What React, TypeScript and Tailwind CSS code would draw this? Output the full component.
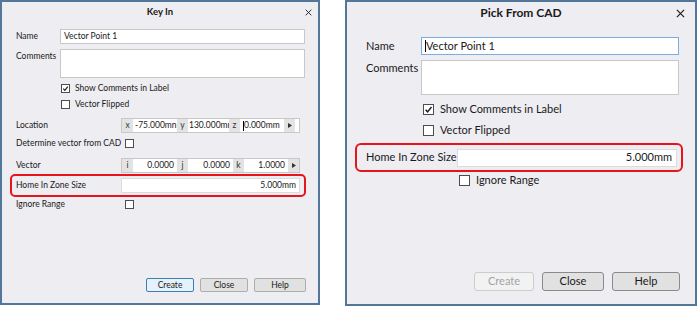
const font = { fontFamily: 'Lato, "Open Sans", Arial, sans-serif' };

const CheckBox = ({ checked, size }: { checked?: boolean; size: number }) => (
  <span
    className={`shrink-0 flex items-center justify-center bg-white border border-[#4d4d4d] ${size === 9 ? "w-[9px] h-[9px]" : "w-[11px] h-[11px]"}`}
  >
    {checked && (
      <svg viewBox="0 0 10 10" className="w-full h-full">
        <path d="M1.8 5.2 L4 7.6 L8.3 2.2" fill="none" stroke="#1a1a1a" strokeWidth="1.6" />
      </svg>
    )}
  </span>
);

const CloseX = ({ s }: { s: number }) => (
  <svg width={s} height={s} viewBox="0 0 10 10">
    <path d="M1 1 L9 9 M9 1 L1 9" stroke="#1a1a1a" strokeWidth="1.3" />
  </svg>
);

const Seg = ({ label }: { label: string }) => (
  <span className="w-[11px] h-full shrink-0 flex items-center justify-center bg-[#e3e3e3] text-[#333]">{label}</span>
);

const Arrow = () => (
  <span className="w-[11px] h-full shrink-0 flex items-center justify-center bg-[#e3e3e3]">
    <svg width="4" height="5" viewBox="0 0 4 5">
      <path d="M0 0 L4 2.5 L0 5 Z" fill="#333" />
    </svg>
  </span>
);

function KeyIn() {
  return (
    <div className="w-[320px] h-[305px] border-2 border-[#52779b] bg-[#eeedf2] flex flex-col text-[8.5px] text-[#1a1a1a] whitespace-nowrap" style={font}>
      <div className="h-[20px] grid grid-cols-[1fr_auto_1fr] items-center">
        <span />
        <span className="font-bold text-[9.5px]">Key In</span>
        <span className="flex justify-end pr-[6px]">
          <CloseX s={7} />
        </span>
      </div>
      <div className="flex flex-col pl-[14px] pr-[13px] mt-[7px]">
        <div className="h-[15px] flex items-center">
          <span className="w-[44px]">Name</span>
          <div className="flex-1 h-full bg-white border border-[#c8c8c8] flex items-center px-[3px]">Vector Point 1</div>
        </div>
        <div className="h-[29px] flex items-start mt-[5px]">
          <span className="w-[44px] pt-[1px]">Comments</span>
          <div className="flex-1 h-full bg-white border border-[#c8c8c8]" />
        </div>
        <div className="h-[14px] flex items-center gap-[5px] mt-[3px] pl-[45px]">
          <CheckBox checked size={9} />
          <span>Show Comments in Label</span>
        </div>
        <div className="h-[14px] flex items-center gap-[5px] mt-[2px] pl-[45px]">
          <CheckBox size={9} />
          <span>Vector Flipped</span>
        </div>
        <div className="h-[15px] flex items-center mt-[7px]">
          <span className="w-[105px]">Location</span>
          <div className="w-[179px] h-full flex border border-[#c8c8c8] bg-white">
            <Seg label="x" />
            <span className="w-[44px] flex items-center pl-[2px]">-75.000mn</span>
            <Seg label="y" />
            <span className="w-[41px] flex items-center pl-[1px]">130.000mn</span>
            <Seg label="z" />
            <span className="w-[44px] flex items-center pl-[3px]">
              <span className="w-px h-[10px] bg-black" />
              0.000mm
            </span>
            <Arrow />
          </div>
        </div>
        <div className="h-[14px] flex items-center mt-[3px]">
          <span className="w-[109px]">Determine vector from CAD</span>
          <CheckBox size={9} />
        </div>
        <div className="h-[15px] flex items-center mt-[8px]">
          <span className="w-[105px]">Vector</span>
          <div className="w-[179px] h-full flex border border-[#c8c8c8] bg-white">
            <Seg label="i" />
            <span className="w-[44px] flex items-center justify-end pr-[3px]">0.0000</span>
            <Seg label="j" />
            <span className="w-[45px] flex items-center justify-end pr-[3px]">0.0000</span>
            <Seg label="k" />
            <span className="w-[44px] flex items-center justify-end pr-[3px]">1.0000</span>
            <Arrow />
          </div>
        </div>
        <div className="h-[23px] -ml-[6px] w-[296px] mt-[1px] border-2 border-[#e8141b] rounded-[5px] flex items-center pl-[4px]">
          <span className="w-[105px]">Home In Zone Size</span>
          <div className="w-[179px] h-[15px] bg-white border border-[#dcdcdc] flex items-center justify-end pr-[3px]">5.000mm</div>
        </div>
        <div className="h-[14px] flex items-center">
          <span className="w-[109px]">Ignore Range</span>
          <CheckBox size={9} />
        </div>
      </div>
      <div className="mt-auto pb-[11px] pr-[12px] flex justify-end gap-[6px]">
        <button className="w-[48px] h-[14px] flex items-center justify-center bg-[#e5f1fb] border border-[#3c7fb1] rounded-[2px]">Create</button>
        <button className="w-[48px] h-[14px] flex items-center justify-center bg-[#e1e1e1] border border-[#adadad] rounded-[2px]">Close</button>
        <button className="w-[52px] h-[14px] flex items-center justify-center bg-[#e1e1e1] border border-[#adadad] rounded-[2px]">Help</button>
      </div>
    </div>
  );
}

function PickFromCad() {
  return (
    <div className="w-[352px] h-[306px] border-2 border-[#52779b] bg-[#eeedf2] flex flex-col text-[11px] text-[#1a1a1a] whitespace-nowrap" style={font}>
      <div className="h-[22px] grid grid-cols-[1fr_auto_1fr] items-center">
        <span />
        <span className="font-bold text-[12px]">Pick From CAD</span>
        <span className="flex justify-end pr-[10px]">
          <CloseX s={9} />
        </span>
      </div>
      <div className="flex flex-col pl-[19px] pr-[16px] mt-[13px]">
        <div className="h-[18px] flex items-center">
          <span className="w-[55px]">Name</span>
          <div className="flex-1 h-full bg-white border border-[#7aaee0] flex items-center pl-[3px]">
            <span className="w-px h-[12px] bg-black" />
            Vector Point 1
          </div>
        </div>
        <div className="h-[35px] flex items-start mt-[5px]">
          <span className="w-[55px]">Comments</span>
          <div className="flex-1 h-full bg-white border border-[#c8c8c8]" />
        </div>
        <div className="h-[14px] flex items-center gap-[6px] mt-[7px] pl-[57px]">
          <CheckBox checked size={11} />
          <span>Show Comments in Label</span>
        </div>
        <div className="h-[14px] flex items-center gap-[6px] mt-[7px] pl-[57px]">
          <CheckBox size={11} />
          <span>Vector Flipped</span>
        </div>
        <div className="h-[29px] -ml-[11px] w-[328px] mt-[6px] border-2 border-[#e8141b] rounded-[6px] flex items-center pl-[9px]">
          <span className="w-[91px]">Home In Zone Size</span>
          <div className="w-[220px] h-[18px] bg-white border border-[#dcdcdc] flex items-center justify-end pr-[4px]">5.000mm</div>
        </div>
        <div className="h-[14px] flex items-center gap-[6px] mt-[1px] pl-[93px]">
          <CheckBox size={11} />
          <span>Ignore Range</span>
        </div>
      </div>
      <div className="mt-auto pb-[13px] pr-[15px] flex justify-end gap-[8px]">
        <button className="w-[60px] h-[19px] flex items-center justify-center bg-[#f2f2f2] border border-[#cccccc] text-[#a3a3a3] rounded-[3px]">Create</button>
        <button className="w-[62px] h-[19px] flex items-center justify-center bg-[#e1e1e1] border border-[#8a8a8a] rounded-[3px]">Close</button>
        <button className="w-[68px] h-[19px] flex items-center justify-center bg-[#e1e1e1] border border-[#8a8a8a] rounded-[3px]">Help</button>
      </div>
    </div>
  );
}

export default function App() {
  return (
    <div className="w-[700px] h-[309px] bg-white flex items-start gap-[25px]">
      <KeyIn />
      <PickFromCad />
    </div>
  );
}
